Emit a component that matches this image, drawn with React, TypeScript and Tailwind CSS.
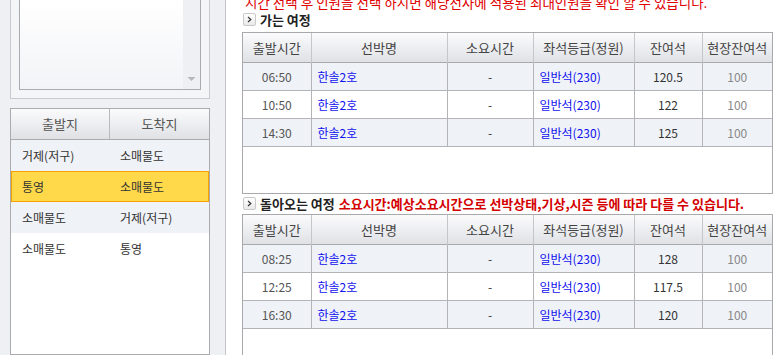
import React from 'react';

type Trip = {
  time: string;
  ship: string;
  duration: string;
  seat: string;
  remain: string;
  onsite: string;
};

const outbound: Trip[] = [
  { time: '06:50', ship: '한솔2호', duration: '-', seat: '일반석(230)', remain: '120.5', onsite: '100' },
  { time: '10:50', ship: '한솔2호', duration: '-', seat: '일반석(230)', remain: '122', onsite: '100' },
  { time: '14:30', ship: '한솔2호', duration: '-', seat: '일반석(230)', remain: '125', onsite: '100' },
];

const inbound: Trip[] = [
  { time: '08:25', ship: '한솔2호', duration: '-', seat: '일반석(230)', remain: '128', onsite: '100' },
  { time: '12:25', ship: '한솔2호', duration: '-', seat: '일반석(230)', remain: '117.5', onsite: '100' },
  { time: '16:30', ship: '한솔2호', duration: '-', seat: '일반석(230)', remain: '120', onsite: '100' },
];

const routes = [
  { from: '거제(저구)', to: '소매물도' },
  { from: '통영', to: '소매물도' },
  { from: '소매물도', to: '거제(저구)' },
  { from: '소매물도', to: '통영' },
];

const headerCell =
  'h-[30px] border-r border-[#c4c6ca] last:border-r-0 bg-gradient-to-b from-[#fbfbfc] to-[#dfe1e5] text-[13px] font-normal text-[#444]';

function ArrowIcon() {
  return (
    <span className="flex h-[13px] w-[13px] items-center justify-center rounded-[2px] border border-[#c9c9c9] bg-gradient-to-b from-white to-[#e9e9e9]">
      <svg width="7" height="7" viewBox="0 0 7 7">
        <path d="M2 1 L4.8 3.5 L2 6" fill="none" stroke="#333" strokeWidth="1.2" />
      </svg>
    </span>
  );
}

function TripTable({ rows, emptyHeight }: { rows: Trip[]; emptyHeight: string }) {
  return (
    <div className="w-[531px] border border-[#a9a9ad] bg-white">
      <table className="w-full table-fixed border-collapse">
        <colgroup>
          <col className="w-[68px]" />
          <col className="w-[136px]" />
          <col className="w-[86px]" />
          <col className="w-[101px]" />
          <col className="w-[68px]" />
          <col />
        </colgroup>
        <thead>
          <tr className="border-b border-[#a9a9ad]">
            <th className={headerCell}>출발시간</th>
            <th className={headerCell}>선박명</th>
            <th className={headerCell}>소요시간</th>
            <th className={headerCell}>좌석등급(정원)</th>
            <th className={headerCell}>잔여석</th>
            <th className={headerCell}>현장잔여석</th>
          </tr>
        </thead>
        <tbody className="text-[12px]">
          {rows.map((r, i) => (
            <tr
              key={r.time}
              className={`h-[28px] border-b border-[#b4b4b8] ${i % 2 === 0 ? 'bg-[#eff2f7]' : 'bg-white'}`}
            >
              <td className="border-r border-[#b4b4b8] text-center text-[#555]">{r.time}</td>
              <td className="border-r border-[#b4b4b8] pl-[6px] text-[#1010ee]">{r.ship}</td>
              <td className="border-r border-[#b4b4b8] text-center text-[#333]">{r.duration}</td>
              <td className="border-r border-[#b4b4b8] pl-[6px] text-[#1010ee]">{r.seat}</td>
              <td className="border-r border-[#b4b4b8] text-center text-[#333]">{r.remain}</td>
              <td className="text-center text-[#888]">{r.onsite}</td>
            </tr>
          ))}
        </tbody>
      </table>
      <div className={emptyHeight} />
    </div>
  );
}

export default function App() {
  return (
    <div
      className="flex h-[355px] w-[783px] overflow-hidden bg-white"
      style={{ fontFamily: '"Noto Sans CJK KR", "Noto Sans", sans-serif' }}
    >
      {/* left panel */}
      <div className="flex w-[226px] shrink-0 flex-col border-r border-[#c3c5c9] bg-[#eef0f3]">
        <div className="ml-[10px] h-[99px] w-[200px] border-x border-b border-[#c8cacd] bg-[#f4f5f7] px-[8px] pb-[8px]">
          <div className="flex h-full border-x border-b border-[#a9abaf] bg-gradient-to-b from-white to-[#f3f4f7]">
            <div className="flex-1" />
            <div className="flex w-[17px] flex-col justify-end bg-[#eff0f3] pb-[7px]">
              <svg width="17" height="6" viewBox="0 0 17 6">
                <path d="M4.5 1 L12.5 1 L8.5 5 Z" fill="#b5b7bb" />
              </svg>
            </div>
          </div>
        </div>

        <div className="ml-[10px] mt-[9px] flex-1 w-[200px] border border-[#a9abaf] bg-white">
          <div className="flex h-[31px] border-b border-[#a9abaf] bg-gradient-to-b from-[#fbfbfc] to-[#dfe1e5] text-[13px] text-[#555]">
            <div className="flex w-[99px] items-center justify-center border-r border-[#b8babe]">출발지</div>
            <div className="flex flex-1 items-center justify-center">도착지</div>
          </div>
          {routes.map((r, i) => {
            const selected = i === 1;
            const bg = selected
              ? 'bg-[#ffd94a] border border-[#f4a300]'
              : i % 2 === 0
              ? 'bg-[#eff2f7] border border-transparent'
              : 'bg-white border border-transparent';
            return (
              <div key={i} className={`flex h-[31px] items-center text-[12px] text-[#333] ${bg}`}>
                <div className="w-[98px] pl-[10px]">{r.from}</div>
                <div className="flex-1 pl-[10px]">{r.to}</div>
              </div>
            );
          })}
        </div>
      </div>

      {/* right content */}
      <div className="flex flex-col pl-[16px]">
        <div className="mt-[-6px] h-[16px] whitespace-nowrap pl-[3px] text-[13.5px] leading-[16px] text-[#e00000]">
          시간 선택 후 인원을 선택 하시면 해당선사에 적용된 최대인원을 확인 할 수 있습니다.
        </div>
        <div className="flex h-[20px] items-center gap-[4px] pl-[1px]">
          <ArrowIcon />
          <span className="text-[13px] font-bold text-[#222]">가는 여정</span>
        </div>
        <div className="mt-[2px]">
          <TripTable rows={outbound} emptyHeight="h-[46px]" />
        </div>
        <div className="flex h-[26px] items-center gap-[4px] pl-[1px]">
          <ArrowIcon />
          <span className="text-[13px] font-bold text-[#222]">돌아오는 여정</span>
          <span className="whitespace-nowrap text-[13px] font-bold text-[#d40000]">
            소요시간:예상소요시간으로 선박상태,기상,시즌 등에 따라 다를 수 있습니다.
          </span>
        </div>
        <div>
          <TripTable rows={inbound} emptyHeight="h-[60px]" />
        </div>
      </div>
    </div>
  );
}
